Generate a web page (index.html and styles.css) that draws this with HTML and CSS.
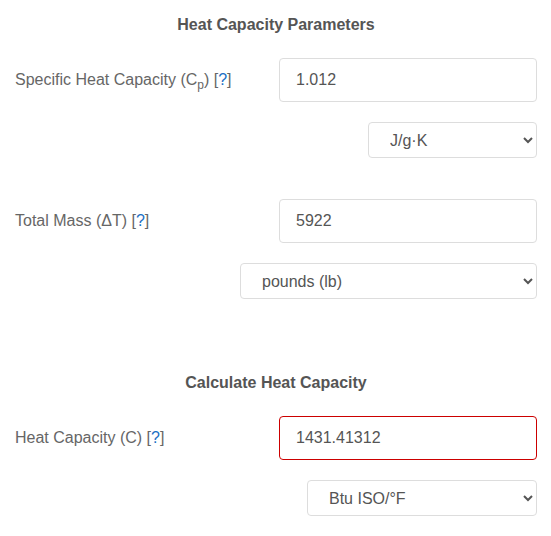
FILE: index.html
```html
<!DOCTYPE html>
<html lang="en">
<head>
    <meta charset="UTF-8">
    <title>Heat Capacity Calculator</title>
    <link rel="stylesheet" href="styles.css">
</head>
<body>
    <div class="section">
        <h2 class="title">Heat Capacity Parameters</h2>

        <div class="field">
            <div class="row">
                <label for="cp">Specific Heat Capacity (C<sub>p</sub>) [<a href="#">?</a>]</label>
                <input type="text" id="cp" value="1.012">
            </div>
            <div class="unit">
                <select class="w-sm">
                    <option>J/g·K</option>
                    <option>J/kg·K</option>
                    <option>cal/g·°C</option>
                </select>
            </div>
        </div>

        <div class="field">
            <div class="row">
                <label for="mass">Total Mass (ΔT) [<a href="#">?</a>]</label>
                <input type="text" id="mass" value="5922">
            </div>
            <div class="unit">
                <select class="w-lg">
                    <option>pounds (lb)</option>
                    <option>kilograms (kg)</option>
                    <option>grams (g)</option>
                </select>
            </div>
        </div>
    </div>

    <div class="section">
        <h2 class="title">Calculate Heat Capacity</h2>

        <div class="field">
            <div class="row">
                <label for="result">Heat Capacity (C) [<a href="#">?</a>]</label>
                <input type="text" id="result" class="result" value="1431.41312">
            </div>
            <div class="unit">
                <select class="w-md">
                    <option>Btu ISO/°F</option>
                    <option>J/K</option>
                    <option>kJ/K</option>
                </select>
            </div>
        </div>
    </div>
</body>
</html>
```

FILE: styles.css
```css
body {
    font-family: "Liberation Sans", Arial, sans-serif;
    font-size: 16px;
    color: #666;
    margin: 0;
    padding: 0 14px 0 15px;
    background: #fff;
}
.section + .section {
    margin-top: 59px;
}
.title {
    font-size: 16px;
    font-weight: bold;
    color: #555;
    text-align: center;
    line-height: 20px;
    padding-top: 15px;
    margin: 0 0 23px;
}
.field + .field {
    margin-top: 41px;
}
.row {
    display: grid;
    grid-template-columns: 1fr 258px;
    align-items: center;
}
label {
    line-height: 20px;
}
label sub {
    font-size: 12px;
    line-height: 0;
}
label a {
    color: #1a6fc4;
    text-decoration: none;
}
input, select {
    font-family: inherit;
    font-size: 16px;
    color: #555;
    background: #fff;
    border: 1px solid #ddd;
    border-radius: 4px;
    box-sizing: border-box;
}
input {
    height: 44px;
    width: 100%;
    padding: 0 16px;
}
input.result {
    border-color: #c00;
}
.unit {
    display: flex;
    justify-content: flex-end;
    margin-top: 20px;
}
select {
    height: 36px;
    padding: 0 4px 0 17px;
}
.w-sm { width: 169px; }
.w-md { width: 230px; }
.w-lg { width: 297px; }
```
